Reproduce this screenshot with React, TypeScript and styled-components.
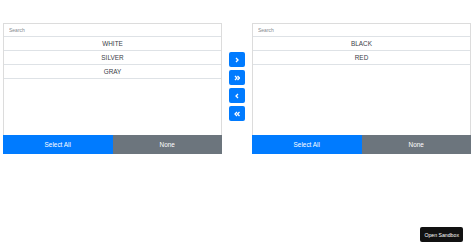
import React, { useState } from "react";
import styled, { createGlobalStyle } from "styled-components";

const GlobalStyle = createGlobalStyle`
  html, body {
    margin: 0;
    padding: 0;
    background: #fff;
    font-family: "Liberation Sans", Arial, sans-serif;
  }
`;

const Page = styled.div`
  display: flex;
  align-items: stretch;
  gap: 7px;
  padding: 23px 0 0 3px;
`;

const Panel = styled.div`
  width: 219px;
  height: 131px;
  box-sizing: border-box;
  border: 1px solid #dcdcdc;
  display: flex;
  flex-direction: column;
`;

const SearchInput = styled.input`
  height: 13px;
  box-sizing: border-box;
  border: none;
  border-bottom: 1px solid #dee2e6;
  padding: 0 0 0 5px;
  margin: 0;
  font-family: "Liberation Sans", Arial, sans-serif;
  font-size: 5px;
  color: #495057;
  outline: none;
  &::placeholder {
    color: #858a8f;
  }
`;

const List = styled.div`
  flex: 1;
  display: flex;
  flex-direction: column;
`;

const Row = styled.div`
  height: 14px;
  box-sizing: border-box;
  border-bottom: 1px solid #dee2e6;
  display: flex;
  align-items: center;
  justify-content: center;
  font-size: 6.4px;
  color: #3a4047;
`;

const Actions = styled.div`
  display: flex;
  height: 19px;
  margin: 0 -1px -1px;
`;

const ActionButton = styled.button<{ $variant: "primary" | "secondary" }>`
  flex: 1;
  border: none;
  margin: 0;
  padding: 0;
  font-family: "Liberation Sans", Arial, sans-serif;
  font-size: 6.4px;
  color: #fff;
  background: ${(p) => (p.$variant === "primary" ? "#007bff" : "#6c757d")};
`;

const MoveColumn = styled.div`
  display: flex;
  flex-direction: column;
  gap: 3px;
  padding-top: 29px;
`;

const MoveButton = styled.button`
  width: 16px;
  height: 15px;
  border: none;
  border-radius: 2px;
  background: #007bff;
  padding: 0;
  display: flex;
  align-items: center;
  justify-content: center;
`;

const SandboxButton = styled.button`
  position: fixed;
  right: 11px;
  bottom: 6px;
  height: 15px;
  padding: 0 4px;
  border: none;
  border-radius: 2px;
  background: #111;
  color: #fff;
  font-family: "Liberation Sans", Arial, sans-serif;
  font-size: 5.2px;
`;

type Dir = "right" | "left";

const Chevron = ({ dir, double }: { dir: Dir; double?: boolean }) => {
  const single = dir === "right" ? "M1 1 L3 3 L1 5" : "M3 1 L1 3 L3 5";
  const second = dir === "right" ? "M3.5 1 L5.5 3 L3.5 5" : "M5.5 1 L3.5 3 L5.5 5";
  return (
    <svg width={double ? 6.5 : 4} height={6} viewBox={double ? "0 0 6.5 6" : "0 0 4 6"}>
      <path d={single} fill="none" stroke="#fff" strokeWidth={1.3} />
      {double && <path d={second} fill="none" stroke="#fff" strokeWidth={1.3} />}
    </svg>
  );
};

const Box = ({ items }: { items: string[] }) => (
  <Panel>
    <SearchInput placeholder="Search" />
    <List>
      {items.map((item) => (
        <Row key={item}>{item}</Row>
      ))}
    </List>
    <Actions>
      <ActionButton $variant="primary">Select All</ActionButton>
      <ActionButton $variant="secondary">None</ActionButton>
    </Actions>
  </Panel>
);

export default function App() {
  const [left] = useState(["WHITE", "SILVER", "GRAY"]);
  const [right] = useState(["BLACK", "RED"]);

  return (
    <>
      <GlobalStyle />
      <Page>
        <Box items={left} />
        <MoveColumn>
          <MoveButton>
            <Chevron dir="right" />
          </MoveButton>
          <MoveButton>
            <Chevron dir="right" double />
          </MoveButton>
          <MoveButton>
            <Chevron dir="left" />
          </MoveButton>
          <MoveButton>
            <Chevron dir="left" double />
          </MoveButton>
        </MoveColumn>
        <Box items={right} />
      </Page>
      <SandboxButton>Open Sandbox</SandboxButton>
    </>
  );
}
